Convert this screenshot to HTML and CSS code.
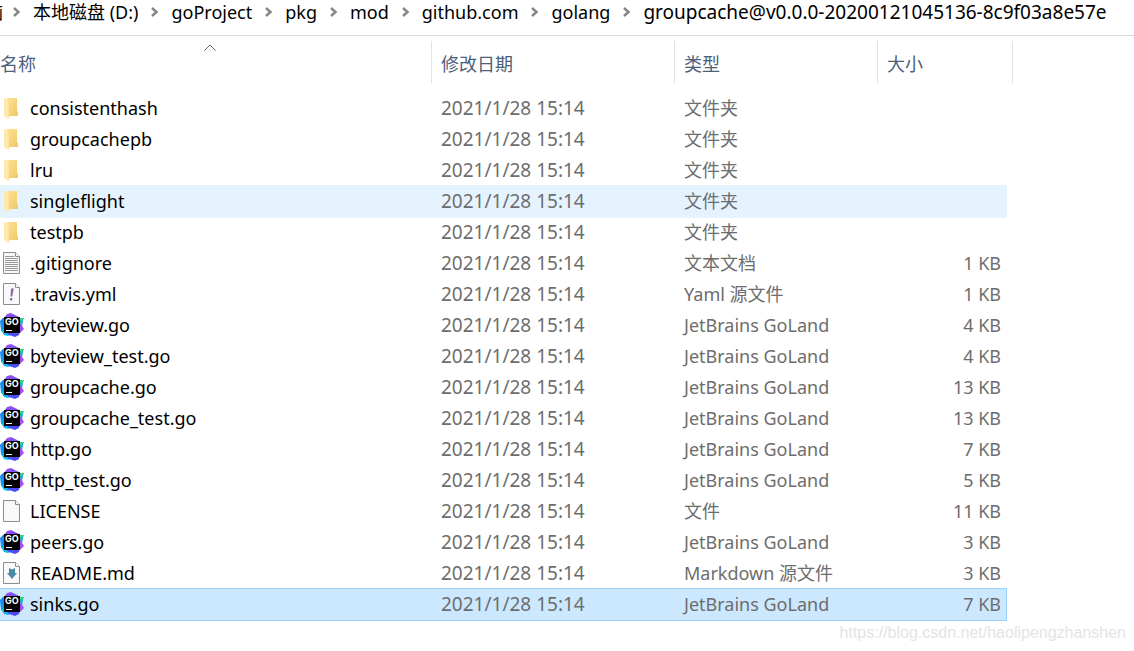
FILE: index.html
```html
<!DOCTYPE html>
<html lang="zh-CN">
<head>
    <meta charset="UTF-8">
    <meta name="viewport" content="width=device-width, initial-scale=1.0">
    <title>groupcache@v0.0.0-20200121045136-8c9f03a8e57e</title>
    <link rel="stylesheet" href="styles.css">
</head>
<body>
    <!-- Shared icons -->
    <svg class="icon-defs" aria-hidden="true">
        <defs>
            <linearGradient id="folderBack" x1="0" y1="0" x2="1" y2="1">
                <stop offset="0" stop-color="#ffe392"/>
                <stop offset="1" stop-color="#edc967"/>
            </linearGradient>
            <linearGradient id="goLeft" x1="0" y1="0" x2="0" y2="1">
                <stop offset="0" stop-color="#1c7ffa"/>
                <stop offset="1" stop-color="#0aa5ef"/>
            </linearGradient>
            <linearGradient id="goPurple" x1="0" y1="0" x2="1" y2="1">
                <stop offset="0" stop-color="#a44ff2"/>
                <stop offset="1" stop-color="#5b50fa"/>
            </linearGradient>
        </defs>
        <symbol id="icon-folder" viewBox="0 0 24 25">
            <path d="M7 2H17V15L18 16V20H7Z" fill="url(#folderBack)"/>
            <path d="M4 2H5L9 5V22L8 23L4 20Z" fill="#ffeaad"/>
            <path d="M9 5V22" stroke="#f0cf78" stroke-width=".5"/>
        </symbol>
        <symbol id="icon-page" viewBox="0 0 24 25">
            <path d="M3.5 1.5H15.5L19.5 5.5V22.5H3.5Z" fill="#f9f9f9" stroke="#8c8c8c"/>
            <path d="M15.5 1.5V5.5H19.5" fill="#fff" stroke="#8c8c8c"/>
        </symbol>
        <symbol id="icon-text" viewBox="0 0 24 25">
            <use href="#icon-page"/>
            <path d="M5 5.5H14M5 7.5H18M5 9.5H18M5 11.5H18M5 13.5H18M5 15.5H18M5 17.5H18M5 19.5H18" stroke="#979797"/>
        </symbol>
        <symbol id="icon-yaml" viewBox="0 0 24 25">
            <use href="#icon-page"/>
            <path d="M11 6.5H13.8L12.3 14.5H10.5Z" fill="#9068b0"/>
            <path d="M10.2 16H12.4L12 18.5H9.8Z" fill="#9068b0"/>
        </symbol>
        <symbol id="icon-markdown" viewBox="0 0 24 25">
            <use href="#icon-page"/>
            <path d="M9 7L12 8.5L15 7V12H17L12 18L7 12H9Z" fill="#478ba9"/>
        </symbol>
        <symbol id="icon-goland" viewBox="0 0 24 25">
            <path d="M0 8L3 5L10 4L7 20L1 18Z" fill="url(#goLeft)"/>
            <path d="M4 5L7 1L11 0L19 4L18 9H5Z" fill="url(#goPurple)"/>
            <path d="M17 5L24 5L22 11L18 10Z" fill="#2dd18b"/>
            <path d="M19 9L23 7L22 14L19 13Z" fill="#24a9d4"/>
            <path d="M18 12L21 11L24 16L20 20H18Z" fill="#a64df4"/>
            <path d="M1 17L8 16L13 21L8 23L4 22Z" fill="#09b8ef"/>
            <path d="M7 20L20 17L19 22L15 24L9 22Z" fill="#4c4cf5"/>
            <rect x="4" y="4" width="16" height="16" fill="#000"/>
            <text x="5" y="12" class="go-text">GO</text>
            <path d="M6 17.5H12" stroke="#fff"/>
        </symbol>
        <symbol id="icon-chevron" viewBox="0 0 9 10">
            <path d="M2 1L6.5 5L2 9" fill="none" stroke="#858585" stroke-width="2.4"/>
        </symbol>
    </svg>

    <nav class="address-bar" aria-label="路径">
        <a class="crumb root" href="#">此电脑</a>
        <svg class="chevron"><use href="#icon-chevron"/></svg>
        <a class="crumb" href="#">本地磁盘 (D:)</a>
        <svg class="chevron"><use href="#icon-chevron"/></svg>
        <a class="crumb" href="#">goProject</a>
        <svg class="chevron"><use href="#icon-chevron"/></svg>
        <a class="crumb" href="#">pkg</a>
        <svg class="chevron"><use href="#icon-chevron"/></svg>
        <a class="crumb" href="#">mod</a>
        <svg class="chevron"><use href="#icon-chevron"/></svg>
        <a class="crumb" href="#">github.com</a>
        <svg class="chevron"><use href="#icon-chevron"/></svg>
        <a class="crumb" href="#">golang</a>
        <svg class="chevron"><use href="#icon-chevron"/></svg>
        <a class="crumb current" href="#">groupcache@v0.0.0-20200121045136-8c9f03a8e57e</a>
    </nav>

    <main class="file-list">
        <table>
            <colgroup>
                <col>
                <col class="col-date">
                <col class="col-type">
                <col class="col-size">
                <col class="col-gutter">
            </colgroup>
            <thead>
                <tr>
                    <th class="name" aria-sort="ascending">
                        名称
                        <svg class="sort-arrow" viewBox="0 0 12 7"><path d="M.5 6.5L6 1L11.5 6.5" fill="none" stroke="#666"/></svg>
                    </th>
                    <th>修改日期</th>
                    <th>类型</th>
                    <th colspan="2">大小</th>
                </tr>
            </thead>
            <tbody>
                <tr>
                    <td class="name"><div class="file"><svg class="icon"><use href="#icon-folder"/></svg>consistenthash</div></td>
                    <td class="date">2021/1/28 15:14</td><td>文件夹</td><td class="size"></td><td></td>
                </tr>
                <tr>
                    <td class="name"><div class="file"><svg class="icon"><use href="#icon-folder"/></svg>groupcachepb</div></td>
                    <td class="date">2021/1/28 15:14</td><td>文件夹</td><td class="size"></td><td></td>
                </tr>
                <tr>
                    <td class="name"><div class="file"><svg class="icon"><use href="#icon-folder"/></svg>lru</div></td>
                    <td class="date">2021/1/28 15:14</td><td>文件夹</td><td class="size"></td><td></td>
                </tr>
                <tr class="hovered">
                    <td class="name"><div class="file"><svg class="icon"><use href="#icon-folder"/></svg>singleflight</div></td>
                    <td class="date">2021/1/28 15:14</td><td>文件夹</td><td class="size"></td><td></td>
                </tr>
                <tr>
                    <td class="name"><div class="file"><svg class="icon"><use href="#icon-folder"/></svg>testpb</div></td>
                    <td class="date">2021/1/28 15:14</td><td>文件夹</td><td class="size"></td><td></td>
                </tr>
                <tr>
                    <td class="name"><div class="file"><svg class="icon"><use href="#icon-text"/></svg>.gitignore</div></td>
                    <td class="date">2021/1/28 15:14</td><td>文本文档</td><td class="size">1 KB</td><td></td>
                </tr>
                <tr>
                    <td class="name"><div class="file"><svg class="icon"><use href="#icon-yaml"/></svg>.travis.yml</div></td>
                    <td class="date">2021/1/28 15:14</td><td>Yaml 源文件</td><td class="size">1 KB</td><td></td>
                </tr>
                <tr>
                    <td class="name"><div class="file"><svg class="icon"><use href="#icon-goland"/></svg>byteview.go</div></td>
                    <td class="date">2021/1/28 15:14</td><td>JetBrains GoLand</td><td class="size">4 KB</td><td></td>
                </tr>
                <tr>
                    <td class="name"><div class="file"><svg class="icon"><use href="#icon-goland"/></svg>byteview_test.go</div></td>
                    <td class="date">2021/1/28 15:14</td><td>JetBrains GoLand</td><td class="size">4 KB</td><td></td>
                </tr>
                <tr>
                    <td class="name"><div class="file"><svg class="icon"><use href="#icon-goland"/></svg>groupcache.go</div></td>
                    <td class="date">2021/1/28 15:14</td><td>JetBrains GoLand</td><td class="size">13 KB</td><td></td>
                </tr>
                <tr>
                    <td class="name"><div class="file"><svg class="icon"><use href="#icon-goland"/></svg>groupcache_test.go</div></td>
                    <td class="date">2021/1/28 15:14</td><td>JetBrains GoLand</td><td class="size">13 KB</td><td></td>
                </tr>
                <tr>
                    <td class="name"><div class="file"><svg class="icon"><use href="#icon-goland"/></svg>http.go</div></td>
                    <td class="date">2021/1/28 15:14</td><td>JetBrains GoLand</td><td class="size">7 KB</td><td></td>
                </tr>
                <tr>
                    <td class="name"><div class="file"><svg class="icon"><use href="#icon-goland"/></svg>http_test.go</div></td>
                    <td class="date">2021/1/28 15:14</td><td>JetBrains GoLand</td><td class="size">5 KB</td><td></td>
                </tr>
                <tr>
                    <td class="name"><div class="file"><svg class="icon"><use href="#icon-page"/></svg>LICENSE</div></td>
                    <td class="date">2021/1/28 15:14</td><td>文件</td><td class="size">11 KB</td><td></td>
                </tr>
                <tr>
                    <td class="name"><div class="file"><svg class="icon"><use href="#icon-goland"/></svg>peers.go</div></td>
                    <td class="date">2021/1/28 15:14</td><td>JetBrains GoLand</td><td class="size">3 KB</td><td></td>
                </tr>
                <tr>
                    <td class="name"><div class="file"><svg class="icon"><use href="#icon-markdown"/></svg>README.md</div></td>
                    <td class="date">2021/1/28 15:14</td><td>Markdown 源文件</td><td class="size">3 KB</td><td></td>
                </tr>
                <tr class="selected">
                    <td class="name"><div class="file"><svg class="icon"><use href="#icon-goland"/></svg>sinks.go</div></td>
                    <td class="date">2021/1/28 15:14</td><td>JetBrains GoLand</td><td class="size">7 KB</td><td></td>
                </tr>
            </tbody>
        </table>
    </main>

    <footer class="watermark">https://blog.csdn.net/haolipengzhanshen</footer>
</body>
</html>
```
FILE: styles.css
```css
body {
    margin: 0;
    background: #fff;
    color: #000;
    font-family: 'Noto Sans', 'Noto Sans CJK SC', sans-serif;
    font-size: 18px;
    line-height: 26px;
    overflow-x: hidden;
}
.icon-defs {
    position: absolute;
    width: 0;
    height: 0;
}

/* Address bar */
.address-bar {
    display: flex;
    align-items: center;
    gap: 12px;
    height: 24px;
    padding-bottom: 11px;
    border-bottom: 1px solid #d9d9d9;
    overflow: hidden;
    white-space: nowrap;
}
.crumb {
    color: #000;
    text-decoration: none;
}
/* the root is scrolled out on the left */
.crumb.root {
    margin: 0 -3px 0 -51px;
}
.crumb.current {
    font-size: 19px;
}
.chevron {
    flex: none;
    width: 9px;
    height: 10px;
}

/* File list */
.file-list {
    padding: 5px 121px 0 0;
}
table {
    width: 100%;
    table-layout: fixed;
    border-collapse: separate;
    border-spacing: 0;
}
.col-date {
    width: 243px;
}
.col-type {
    width: 203px;
}
.col-size {
    width: 129px;
}
.col-gutter {
    width: 6px;
}
th, td {
    box-sizing: border-box;
    padding: 0 0 2px 9px;
    text-align: left;
    font-weight: normal;
    white-space: nowrap;
}
th {
    position: relative;
    height: 42px;
    padding: 3px 0 0 9px;
    border-right: 1px solid #e2e2e2;
    color: #4c607a;
}
th.name, td.name {
    padding-left: 0;
}
.sort-arrow {
    position: absolute;
    top: 3px;
    left: 0;
    right: 11px;
    margin: 0 auto;
    width: 12px;
    height: 7px;
}
/* space between the header and the first row */
tbody::before {
    content: "";
    display: block;
    height: 10px;
}
td {
    height: 31px;
    color: #6d6d6d;
}
td.name {
    color: #000;
}
td.date {
    font-size: 19px;
}
td.size {
    padding: 0 6px 2px 0;
    text-align: right;
}
.file {
    display: flex;
    align-items: center;
    gap: 6px;
}
.icon {
    flex: none;
    width: 24px;
    height: 25px;
    margin-top: 2px;
}
.go-text {
    font-family: Inter, sans-serif;
    font-size: 9px;
    font-weight: 700;
    fill: #fff;
}
.hovered td:not(:last-child) {
    background: #e5f3ff;
    box-shadow: 0 -1px 0 #e5f3ff, 0 1px 0 #e5f3ff;
}
.selected td:not(:last-child) {
    background: #cce8ff;
    box-shadow: 0 -1px 0 #99d1ff, 0 1px 0 #99d1ff;
}
.selected td.size {
    border-right: 1px solid #99d1ff;
    padding-right: 5px;
}

.watermark {
    padding: 0 8px;
    color: #e4e4e4;
    font-family: 'Liberation Sans', Arial, sans-serif;
    font-size: 16px;
    text-align: right;
}
```
